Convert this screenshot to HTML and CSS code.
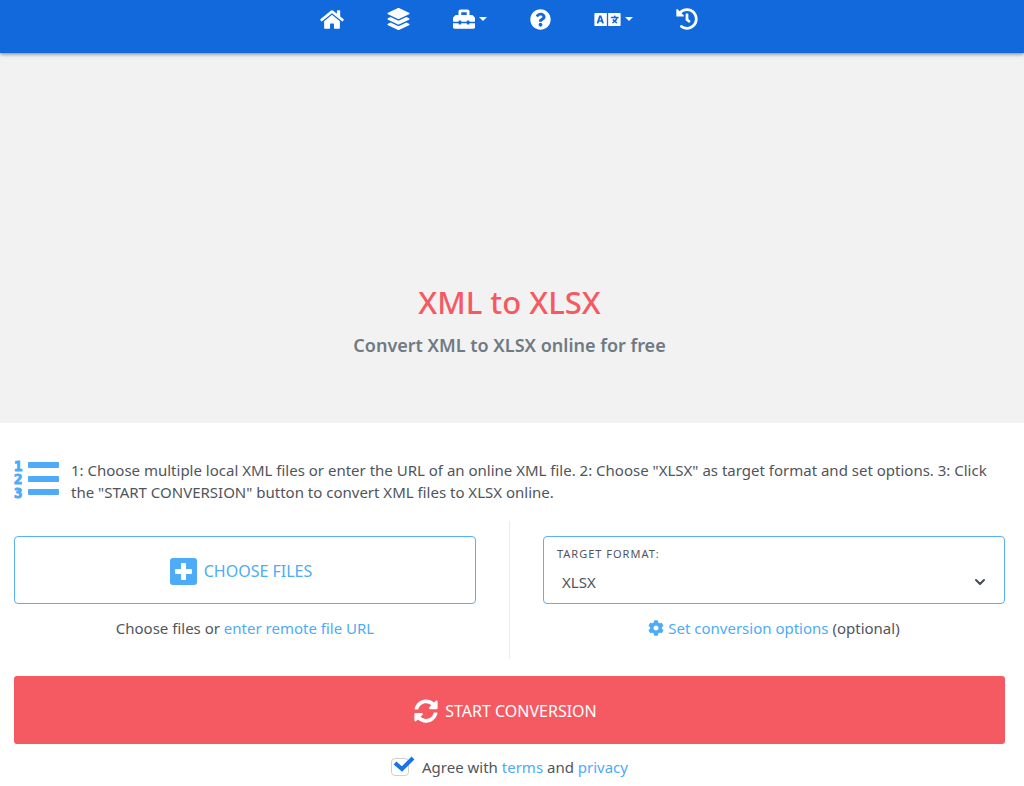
FILE: index.html
```
<!DOCTYPE html>
<html lang="en">
<head>
    <meta charset="UTF-8">
    <meta name="viewport" content="width=device-width, initial-scale=1.0">
    <title>XML to XLSX</title>
    <link rel="stylesheet" href="styles.css">
</head>
<body>
    <header>
        <nav class="menu">
            <a href="#" aria-label="Home">
                <svg class="icon" width="24" height="21" viewBox="0 0 576 512"><path d="M280.37 148.26L96 300.11V464a16 16 0 0 0 16 16l112.06-.29a16 16 0 0 0 15.92-16V368a16 16 0 0 1 16-16h64a16 16 0 0 1 16 16v95.64a16 16 0 0 0 16 16.05L464 480a16 16 0 0 0 16-16V300L295.67 148.26a12.19 12.19 0 0 0-15.3 0zM571.6 251.47L488 182.56V44.05a12 12 0 0 0-12-12h-56a12 12 0 0 0-12 12v72.61L318.47 43a48 48 0 0 0-61 0L4.34 251.47a12 12 0 0 0-1.6 16.9l25.5 31A12 12 0 0 0 45.15 301l235.22-193.74a12.19 12.19 0 0 1 15.3 0L530.9 301a12 12 0 0 0 16.9-1.6l25.5-31a12 12 0 0 0-1.7-16.93z"/></svg>
            </a>
            <a href="#" aria-label="Formats">
                <svg class="icon" width="23" height="22" viewBox="0 0 512 512"><path d="M12.41 148.02l232.94 105.67c6.8 3.09 14.49 3.09 21.29 0l232.94-105.67c16.55-7.51 16.55-32.52 0-40.03L266.65 2.31a25.607 25.607 0 0 0-21.29 0L12.41 107.98c-16.55 7.51-16.55 32.53 0 40.04zm487.18 88.28l-58.09-26.33-161.64 73.27c-7.56 3.43-15.59 5.17-23.86 5.17s-16.29-1.74-23.86-5.17L70.51 209.97l-58.1 26.33c-16.55 7.5-16.55 32.5 0 40l232.94 105.59c6.8 3.08 14.49 3.08 21.29 0L499.59 276.3c16.55-7.5 16.55-32.5 0-40zm0 127.8l-57.87-26.23-161.86 73.37c-7.56 3.43-15.59 5.17-23.86 5.17s-16.29-1.74-23.86-5.17L70.29 337.87 12.41 364.1c-16.55 7.5-16.55 32.5 0 40l232.94 105.59c6.8 3.08 14.49 3.08 21.29 0L499.59 404.1c16.55-7.5 16.55-32.5 0-40z"/></svg>
            </a>
            <a href="#" class="dropdown" aria-label="Tools">
                <svg class="icon" width="22" height="22" viewBox="0 0 512 512"><path d="M502.63 214.63l-45.25-45.25c-6-6-14.14-9.37-22.63-9.37H384V80c0-26.51-21.49-48-48-48H176c-26.51 0-48 21.49-48 48v80H77.25c-8.49 0-16.62 3.37-22.63 9.37L9.37 214.63c-6 6-9.37 14.14-9.37 22.63V320h128v-16c0-8.84 7.16-16 16-16h32c8.84 0 16 7.16 16 16v16h128v-16c0-8.84 7.16-16 16-16h32c8.84 0 16 7.16 16 16v16h128v-82.75c0-8.48-3.37-16.62-9.37-22.62zM320 160H192V96h128v64zm64 208c0 8.84-7.16 16-16 16h-32c-8.84 0-16-7.16-16-16v-16H192v16c0 8.84-7.16 16-16 16h-32c-8.84 0-16-7.16-16-16v-16H0v96c0 17.67 14.33 32 32 32h448c17.67 0 32-14.33 32-32v-96H384v16z"/></svg>
            </a>
            <a href="#" aria-label="Help">
                <svg class="icon" width="21" height="21" viewBox="0 0 512 512"><path d="M504 256c0 136.997-111.043 248-248 248S8 392.997 8 256C8 119.083 119.043 8 256 8s248 111.083 248 248zM262.655 90c-54.497 0-89.255 22.957-116.549 63.758-3.536 5.286-2.353 12.415 2.715 16.258l34.699 26.31c5.205 3.947 12.621 3.008 16.665-2.122 17.864-22.658 30.113-35.797 57.303-35.797 20.429 0 45.698 13.148 45.698 32.958 0 14.976-12.363 22.667-32.534 33.976C247.128 238.528 216 254.941 216 296v4c0 6.627 5.373 12 12 12h56c6.627 0 12-5.373 12-12v-1.333c0-28.462 83.186-29.647 83.186-106.667 0-58.002-60.165-102-116.531-102zM256 338c-25.365 0-46 20.635-46 46 0 25.364 20.635 46 46 46s46-20.636 46-46c0-25.365-20.635-46-46-46z"/></svg>
            </a>
            <a href="#" class="dropdown" aria-label="Language">
                <svg class="icon" width="27" height="21" viewBox="0 0 640 512"><path d="M152.1 236.2c-3.5-12.1-7.8-33.2-7.8-33.2h-.5s-4.3 21.1-7.8 33.2l-11.1 37.5H163zM616 96H336v320h280c13.3 0 24-10.7 24-24V120c0-13.3-10.7-24-24-24zm-24 120c0 6.6-5.4 12-12 12h-11.4c-6.9 23.6-21.7 47.4-42.7 69.9 8.4 6.4 17.1 12.5 26.1 18 5.5 3.4 7.3 10.5 4.1 16.2l-7.9 13.9c-3.4 5.9-10.9 7.8-16.7 4.3-12.6-7.8-24.5-16.1-35.4-24.9-10.9 8.7-22.7 17.1-35.4 24.9-5.8 3.5-13.3 1.6-16.7-4.3l-7.9-13.9c-3.2-5.6-1.4-12.8 4.2-16.2 9.3-5.7 18-11.7 26.1-18-7.9-8.4-14.9-17-21-25.7-4-5.7-2.2-13.6 3.7-17.1l6.5-3.9 7.3-4.3c5.4-3.2 12.4-1.7 16 3.4 5 7 10.8 14 17.4 20.9 13.5-14.2 23.8-28.9 30-43.2H412c-6.6 0-12-5.4-12-12v-16c0-6.6 5.4-12 12-12h64v-16c0-6.6 5.4-12 12-12h16c6.6 0 12 5.4 12 12v16h64c6.6 0 12 5.4 12 12zM0 120v272c0 13.3 10.7 24 24 24h280V96H24c-13.3 0-24 10.7-24 24zm58.9 216.1L116.4 167c1.7-4.9 6.2-8.1 11.4-8.1h32.5c5.1 0 9.7 3.3 11.4 8.1l57.5 169.1c2.6 7.8-3.1 15.9-11.4 15.9h-22.9a12 12 0 0 1-11.5-8.6l-9.4-31.9h-60.2l-9.1 31.8c-1.5 5.1-6.2 8.7-11.5 8.7H70.3c-8.2 0-14-8.1-11.4-15.9z"/></svg>
            </a>
            <a href="#" aria-label="History">
                <svg class="icon" width="22" height="22" viewBox="0 0 512 512"><path d="M504 255.531c.253 136.64-111.18 248.372-247.82 248.468-59.015.042-113.223-20.53-155.822-54.911-11.077-8.94-11.905-25.541-1.839-35.607l11.267-11.267c8.609-8.609 22.353-9.551 31.891-1.984C173.062 425.135 212.781 440 256 440c101.705 0 184-82.311 184-184 0-101.705-82.311-184-184-184-48.814 0-93.149 18.969-126.068 49.932l50.754 50.754c10.08 10.08 2.941 27.314-11.313 27.314H24c-8.837 0-16-7.163-16-16V38.627c0-14.254 17.234-21.393 27.314-11.314l49.372 49.372C129.209 34.136 189.552 8 256 8c136.81 0 247.747 110.78 248 247.531zm-180.912 78.784l9.823-12.63c8.138-10.463 6.253-25.542-4.21-33.679L288 256.349V152c0-13.255-10.745-24-24-24h-16c-13.255 0-24 10.745-24 24v135.651l65.409 50.874c10.463 8.137 25.541 6.253 33.679-4.21z"/></svg>
            </a>
        </nav>
    </header>

    <section class="hero">
        <h1>XML to XLSX</h1>
        <h2>Convert XML to XLSX online for free</h2>
    </section>

    <main>
        <div class="steps">
            <svg class="icon" width="45" height="40" viewBox="0 0 45 40" aria-hidden="true">
                <text class="digit" x="0" y="12">1</text>
                <text class="digit" x="0" y="25">2</text>
                <text class="digit" x="0" y="39">3</text>
                <rect x="14" y="3" width="31" height="6" rx="1"/>
                <rect x="14" y="17" width="31" height="6" rx="1"/>
                <rect x="14" y="30" width="31" height="6" rx="1"/>
            </svg>
            <p>1: Choose multiple local XML files or enter the URL of an online XML file. 2: Choose "XLSX" as target format and set options. 3: Click the "START CONVERSION" button to convert XML files to XLSX online.</p>
        </div>

        <form onsubmit="return false">
            <div class="columns">
                <div class="column">
                    <button type="button" class="box choose">
                        <svg class="icon" width="27" height="27" viewBox="0 0 27 27"><path fill-rule="evenodd" d="M3 0h21a3 3 0 0 1 3 3v21a3 3 0 0 1-3 3H3a3 3 0 0 1-3-3V3a3 3 0 0 1 3-3zM12 5a1 1 0 0 0-1 1v5H6a1 1 0 0 0-1 1v3a1 1 0 0 0 1 1h5v5a1 1 0 0 0 1 1h3a1 1 0 0 0 1-1v-5h5a1 1 0 0 0 1-1v-3a1 1 0 0 0-1-1h-5V6a1 1 0 0 0-1-1z"/></svg>
                        CHOOSE FILES
                    </button>
                    <p>Choose files or <a href="#">enter remote file URL</a></p>
                </div>
                <div class="divider"></div>
                <div class="column">
                    <div class="box target">
                        <label for="format">TARGET FORMAT:</label>
                        <select id="format">
                            <option>XLSX</option>
                        </select>
                    </div>
                    <p>
                        <a href="#"><svg class="icon cog" width="16" height="16" viewBox="0 0 512 512"><path d="M487.4 315.7l-42.6-24.6c4.3-23.2 4.3-47 0-70.2l42.6-24.6c4.9-2.8 7.1-8.6 5.5-14-11.1-35.6-30-67.8-54.7-94.6-3.8-4.1-10-5.1-14.8-2.3L380.8 110c-17.9-15.4-38.5-27.3-60.8-35.1V25.8c0-5.6-3.9-10.5-9.4-11.7-36.7-8.2-74.3-7.8-109.2 0-5.5 1.2-9.4 6.1-9.4 11.7V75c-22.2 7.9-42.8 19.8-60.8 35.1L88.7 85.5c-4.9-2.8-11-1.9-14.8 2.3-24.7 26.7-43.6 58.9-54.7 94.6-1.7 5.4.6 11.2 5.5 14L67.3 221c-4.3 23.2-4.3 47 0 70.2l-42.6 24.6c-4.9 2.8-7.1 8.6-5.5 14 11.1 35.6 30 67.8 54.7 94.6 3.8 4.1 10 5.1 14.8 2.3l42.6-24.6c17.9 15.4 38.5 27.3 60.8 35.1v49.2c0 5.6 3.9 10.5 9.4 11.7 36.7 8.2 74.3 7.8 109.2 0 5.5-1.2 9.4-6.1 9.4-11.7v-49.2c22.2-7.9 42.8-19.8 60.8-35.1l42.6 24.6c4.9 2.8 11 1.9 14.8-2.3 24.7-26.7 43.6-58.9 54.7-94.6 1.5-5.5-.7-11.3-5.6-14.1zM256 336c-44.1 0-80-35.9-80-80s35.9-80 80-80 80 35.9 80 80-35.9 80-80 80z"/></svg>
                        Set conversion options</a> (optional)
                    </p>
                </div>
            </div>

            <button type="submit" class="start">
                <svg class="icon" width="24" height="24" viewBox="0 0 512 512"><path d="M370.72 133.28C339.458 104.008 298.888 87.962 255.848 88c-77.458.068-144.328 53.178-162.791 126.85-1.344 5.363-6.122 9.15-11.651 9.15H24.103c-7.498 0-13.194-6.807-11.807-14.176C33.933 94.924 134.813 8 256 8c66.448 0 126.791 26.136 171.315 68.685L463.03 40.97C478.149 25.851 504 36.559 504 57.941V192c0 13.255-10.745 24-24 24H345.941c-21.382 0-32.09-25.851-16.971-40.971l41.75-41.749zM32 296h134.059c21.382 0 32.09 25.851 16.971 40.971l-41.75 41.75c31.262 29.273 71.835 45.319 114.876 45.28 77.418-.07 144.315-53.144 162.787-126.849 1.344-5.363 6.122-9.15 11.651-9.15h57.304c7.498 0 13.194 6.807 11.807 14.176C478.067 417.076 377.187 504 256 504c-66.448 0-126.791-26.136-171.315-68.685L48.97 471.03C33.851 486.149 8 475.441 8 454.059V320c0-13.255 10.745-24 24-24z"/></svg>
                START CONVERSION
            </button>

            <div class="agree">
                <input type="checkbox" id="agree" checked>
                <label for="agree">Agree with <a href="#">terms</a> and <a href="#">privacy</a></label>
            </div>
        </form>
    </main>
</body>
</html>
```
FILE: styles.css
```
* {
    box-sizing: border-box;
}
body {
    margin: 0;
    background-color: #fff;
    color: #50555c;
    font-family: "Noto Sans", sans-serif;
    font-size: 15px;
    line-height: 22px;
}
h1, h2, p {
    margin: 0;
}
a {
    color: #4dabf7;
    text-decoration: none;
}
.icon {
    display: block;
    flex: none;
    fill: currentColor;
}

header {
    position: relative;
    height: 53px;
    padding: 8px 6px 0 0;
    background-color: #1269db;
    box-shadow: 0 1px 4px rgba(0, 0, 0, 0.5);
}
.menu {
    display: flex;
    justify-content: center;
    gap: 43px;
}
.menu a {
    display: flex;
    align-items: center;
    gap: 4px;
    color: #fff;
}
.dropdown::after {
    content: "";
    border-top: 4px solid #fff;
    border-left: 4px solid transparent;
    border-right: 4px solid transparent;
}

.hero {
    padding: 227px 19px 65px 14px;
    background-color: #f2f2f2;
    text-align: center;
}
.hero h1 {
    color: #f55a63;
    font-size: 31px;
    font-weight: 500;
    line-height: 44px;
}
.hero h2 {
    margin-top: 8px;
    color: #6f7a83;
    font-size: 18px;
    font-weight: 600;
    line-height: 26px;
}

main {
    padding: 36px 19px 8px 14px;
}
.steps {
    display: flex;
    gap: 12px;
    color: #50555c;
}
.steps .icon {
    overflow: visible;
    color: #4dabf7;
}
.digit {
    font-family: "DejaVu Sans Mono", monospace;
    font-size: 14px;
    font-weight: bold;
    stroke: currentColor;
    stroke-width: 1px;
}

.columns {
    display: grid;
    grid-template-columns: 1fr 1px 1fr;
    gap: 33px;
    margin-top: 18px;
}
.column {
    padding: 15px 0 20px;
    text-align: center;
}
.column p {
    margin-top: 13px;
}
.divider {
    background-color: #ececec;
}
.box {
    width: 100%;
    height: 68px;
    border: 1px solid #5bb1f5;
    border-radius: 4px;
    background-color: #fff;
}
.choose, .start {
    display: flex;
    align-items: center;
    justify-content: center;
    gap: 7px;
    padding: 2px 14px 0 6px;
    font-family: inherit;
    font-size: 16px;
    cursor: pointer;
}
.choose {
    color: #4dabf7;
}
.target {
    display: flex;
    flex-direction: column;
    padding: 8px 13px;
    text-align: left;
}
.target label {
    font-size: 11px;
    line-height: 18px;
    letter-spacing: 1px;
}
.target select {
    height: 32px;
    margin-top: 6px;
    padding: 0 5px;
    border: 0;
    appearance: none;
    background: url("data:image/svg+xml,%3Csvg xmlns='http://www.w3.org/2000/svg' width='12' height='8' viewBox='0 0 12 8'%3E%3Cpath d='M2 2l4 4 4-4' fill='none' stroke='%23444b52' stroke-width='2' stroke-linecap='round' stroke-linejoin='round'/%3E%3C/svg%3E") no-repeat right 5px center;
    color: inherit;
    font: inherit;
}
.cog {
    display: inline-block;
    vertical-align: -2px;
}

.start {
    width: 100%;
    height: 68px;
    margin-top: 17px;
    border: 0;
    border-radius: 3px;
    background-color: #f55a63;
    color: #fff;
}
.agree {
    display: flex;
    align-items: center;
    justify-content: center;
    gap: 13px;
    margin-top: 12px;
}
.agree input {
    position: relative;
    width: 18px;
    height: 18px;
    margin: 0;
    border: 1px solid #cfcfcf;
    border-radius: 4px;
    appearance: none;
}
.agree input:checked::after {
    content: "";
    position: absolute;
    top: -4px;
    left: 1px;
    width: 22px;
    height: 18px;
    background: url("data:image/svg+xml,%3Csvg xmlns='http://www.w3.org/2000/svg' viewBox='0 0 22 18'%3E%3Cpath d='M2 8l7 6L20 3' fill='none' stroke='%231a73e8' stroke-width='4'/%3E%3C/svg%3E") no-repeat;
}
```
